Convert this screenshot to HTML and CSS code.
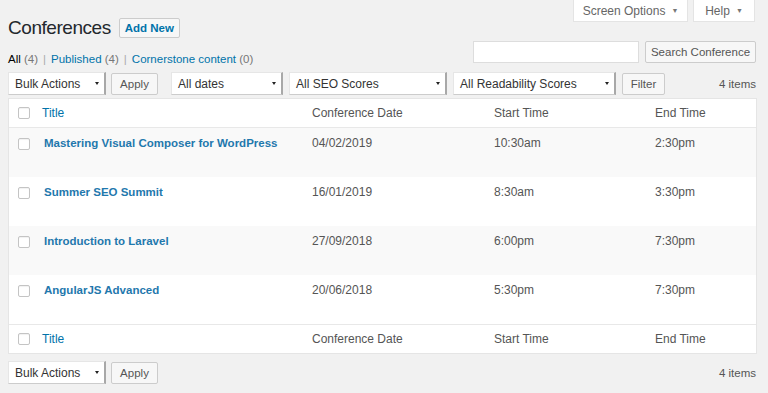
FILE: index.html
```html
<!DOCTYPE html>
<html>
<head>
<meta charset="utf-8">
<link rel="stylesheet" href="styles.css">
</head>
<body>
<div class="tabs">
  <div class="tab tab-screen">Screen Options <span class="tri">▼</span></div>
  <div class="tab tab-help">Help <span class="tri">▼</span></div>
</div>
<div class="wrap">
  <div class="head">
    <h1 class="title">Conferences</h1>
    <a class="add-new">Add New</a>
  </div>
  <div class="sub-row">
    <ul class="subsub">
      <li><b class="cur">All</b> <span class="cnt">(4)</span></li>
      <li class="sep">|</li>
      <li><a>Published</a> <span class="cnt">(4)</span></li>
      <li class="sep">|</li>
      <li><a>Cornerstone content</a> <span class="cnt">(0)</span></li>
    </ul>
    <div class="search">
      <div class="search-input"></div>
      <div class="btn btn-search">Search Conference</div>
    </div>
  </div>
  <div class="nav top">
    <div class="sel w-bulk"><span>Bulk Actions</span><i class="arr"></i></div>
    <div class="btn btn-apply">Apply</div>
    <div class="sel w-dates"><span>All dates</span><i class="arr"></i></div>
    <div class="sel w-seo"><span>All SEO Scores</span><i class="arr"></i></div>
    <div class="sel w-read"><span>All Readability Scores</span><i class="arr"></i></div>
    <div class="btn btn-filter">Filter</div>
    <div class="items">4 items</div>
  </div>
  <div class="table">
    <div class="row hdr">
      <div class="c-cb"><span class="cb"></span></div>
      <div class="c-title"><a>Title</a></div>
      <div class="c-date">Conference Date</div>
      <div class="c-start">Start Time</div>
      <div class="c-end">End Time</div>
    </div>
    <div class="row body alt">
      <div class="c-cb"><span class="cb"></span></div>
      <div class="c-title"><a class="strong">Mastering Visual Composer for WordPress</a></div>
      <div class="c-date">04/02/2019</div>
      <div class="c-start">10:30am</div>
      <div class="c-end">2:30pm</div>
    </div>
    <div class="row body">
      <div class="c-cb"><span class="cb"></span></div>
      <div class="c-title"><a class="strong">Summer SEO Summit</a></div>
      <div class="c-date">16/01/2019</div>
      <div class="c-start">8:30am</div>
      <div class="c-end">3:30pm</div>
    </div>
    <div class="row body alt">
      <div class="c-cb"><span class="cb"></span></div>
      <div class="c-title"><a class="strong">Introduction to Laravel</a></div>
      <div class="c-date">27/09/2018</div>
      <div class="c-start">6:00pm</div>
      <div class="c-end">7:30pm</div>
    </div>
    <div class="row body">
      <div class="c-cb"><span class="cb"></span></div>
      <div class="c-title"><a class="strong">AngularJS Advanced</a></div>
      <div class="c-date">20/06/2018</div>
      <div class="c-start">5:30pm</div>
      <div class="c-end">7:30pm</div>
    </div>
    <div class="row hdr ftr">
      <div class="c-cb"><span class="cb"></span></div>
      <div class="c-title"><a>Title</a></div>
      <div class="c-date">Conference Date</div>
      <div class="c-start">Start Time</div>
      <div class="c-end">End Time</div>
    </div>
  </div>
  <div class="nav bottom">
    <div class="sel w-bulk"><span>Bulk Actions</span><i class="arr"></i></div>
    <div class="btn btn-apply">Apply</div>
    <div class="items">4 items</div>
  </div>
</div>
</body>
</html>
```
FILE: styles.css
```css
* { box-sizing: border-box; }
html, body { margin: 0; padding: 0; }
body {
  background: #f1f1f1;
  font-family: "Liberation Sans", Arial, sans-serif;
  font-size: 12px;
  color: #444;
  width: 768px;
  height: 393px;
  overflow: hidden;
  position: relative;
}
a { color: #0073aa; text-decoration: none; }

.tabs {
  display: flex;
  justify-content: flex-end;
  gap: 5px;
  padding-right: 13px;
  height: 22px;
}
.tab {
  background: #fff;
  border: 1px solid #e4e4e4;
  border-top: none;
  color: #666;
  font-size: 12px;
  height: 22px;
  display: flex;
  align-items: center;
  justify-content: center;
}
.tab-screen { width: 115px; }
.tab-help { width: 62px; }
.tri { font-size: 7px; margin-left: 6px; color: #777; }

.wrap { padding: 0 12px 0 8px; }

.head {
  display: flex;
  align-items: center;
  margin-top: -5px;
  height: 22px;
}
.title {
  margin: 0;
  font-size: 19px;
  font-weight: 400;
  color: #23282d;
  line-height: 22px;
  letter-spacing: -0.45px;
}
.add-new {
  margin-left: 8px;
  border: 1px solid #ccc;
  background: #f7f7f7;
  color: #0073aa;
  font-weight: 700;
  font-size: 11.5px;
  height: 20px;
  width: 61px;
  display: flex;
  align-items: center;
  justify-content: center;
  border-radius: 2px;
}

.sub-row {
  display: flex;
  justify-content: space-between;
  align-items: flex-start;
  margin-top: -1px;
  height: 34px;
}
.subsub {
  list-style: none;
  margin: 0;
  padding: 0;
  display: flex;
  gap: 5px;
  font-size: 11.5px;
  margin-top: 15px;
  color: #555;
}
.subsub .cur { color: #000; font-weight: 400; }
.subsub .cnt { color: #777; }
.subsub .sep { color: #aaa; }
.search { display: flex; gap: 6px; margin-top: 3px; }
.search-input {
  width: 166px;
  height: 22px;
  background: #fff;
  border: 1px solid #ddd;
}
.btn {
  height: 22px;
  border: 1px solid #ccc;
  background: #f7f7f7;
  color: #555;
  font-size: 11.5px;
  display: flex;
  align-items: center;
  justify-content: center;
  border-radius: 2px;
}
.btn-search { width: 111px; }

.nav {
  display: flex;
  align-items: center;
  height: 23px;
}
.sel {
  height: 23px;
  background: #fff;
  border: 1px solid #e6e6e6;
  display: flex;
  align-items: center;
  padding-left: 6px;
  font-size: 12px;
  color: #333;
  position: relative;
  border-right: 2px solid #a8a8a8;
  border-bottom-color: #ccc;
}
.sel span { flex: 1; }
.arr {
  width: 0; height: 0;
  border-left: 2px solid transparent;
  border-right: 2px solid transparent;
  border-top: 3px solid #222;
  margin-right: 5px;
}
.w-bulk { width: 98px; }
.w-dates { width: 112px; margin-left: 13px; }
.w-seo { width: 158px; margin-left: 6px; }
.w-read { width: 163px; margin-left: 6px; }
.btn-apply { width: 47px; margin-left: 5px; }
.btn-filter { width: 43px; margin-left: 6px; }
.items { margin-left: auto; color: #555; font-size: 11.5px; }

.table {
  margin-top: 3px;
  background: #fff;
  border: 1px solid #e5e5e5;
  width: 749px;
}
.row {
  display: flex;
  align-items: flex-start;
  font-size: 12px;
  color: #555;
}
.row.hdr { height: 29px; align-items: center; border-bottom: 1px solid #e8e8e8; }
.row.ftr { border-bottom: none; border-top: 1px solid #e8e8e8; height: 29px; }
.row.body { height: 49px; padding-top: 8px; }
.row.alt { background: #f9f9f9; }
.c-cb { width: 33px; padding-left: 9px; display: flex; align-items: center; height: 15px; }
.cb {
  width: 12px; height: 12px;
  border: 1px solid #c4c4c4;
  border-radius: 2px;
  background: #fff;
  box-shadow: inset 0 1px 1px rgba(0,0,0,.06);
}
.c-title { width: 270px; line-height: 15px; }
.c-title .strong { font-weight: 700; font-size: 11.5px; color: #1f78ad; margin-left: 2px; }
.c-date { width: 182px; line-height: 15px; }
.c-start { width: 161px; line-height: 15px; }
.c-end { flex: 1; line-height: 15px; }

.nav.bottom { margin-top: 7px; }
```
